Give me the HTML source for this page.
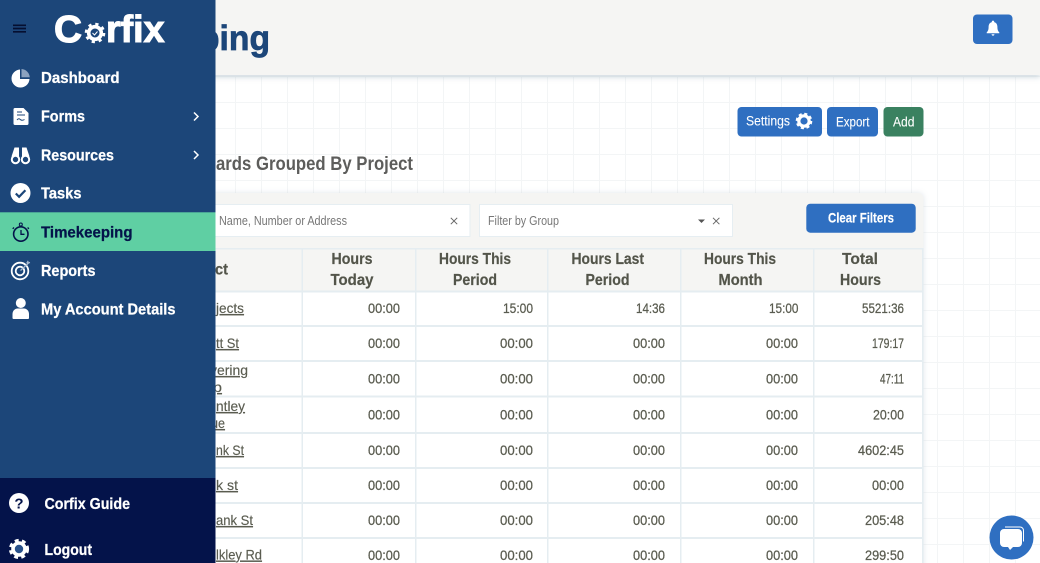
<!DOCTYPE html>
<html><head><meta charset="utf-8"><title>Timekeeping</title>
<style>
html,body{margin:0;padding:0;width:1040px;height:563px;overflow:hidden;background:#fff}
svg{display:block}
text{font-family:"Liberation Sans",sans-serif}
.n{font-weight:700;font-size:16px;fill:#fff;stroke:#fff;stroke-width:.25}
.d{fill:#04134a;stroke:#04134a}
.h{font-weight:700;font-size:15.5px;fill:#53554a;stroke:#53554a;stroke-width:.2}
.v{font-size:14px;fill:#5a5c50;stroke:#5a5c50;stroke-width:.25}
.l{font-size:14px;fill:#5a5c50;stroke:#5a5c50;stroke-width:.15;text-decoration:underline}
.p{font-size:13px;fill:#777}
.b{font-size:13.5px;fill:#fff;stroke:#fff;stroke-width:.1}
.t{font-size:35px;font-weight:700;fill:#1c4679;stroke:#1c4679;stroke-width:.7}
.g{font-size:19px;font-weight:700;fill:#5d5d5b}
.o{font-size:38px;font-weight:700;fill:#fff;stroke:#fff;stroke-width:1.100}
</style></head><body>
<svg width="1040" height="563" viewBox="0 0 1040 563" xmlns="http://www.w3.org/2000/svg">
<defs>
<pattern id="g" x="1" y="24" width="26" height="26" patternUnits="userSpaceOnUse"><path d="M.5 0V26M0 .5H26" stroke="#f3f5f6" stroke-width="1" fill="none"/></pattern>
<filter id="s" x="-10%" y="-50%" width="120%" height="220%"><feDropShadow dx="0" dy="2" stdDeviation="3" flood-color="#a9bcc6" flood-opacity=".6"/></filter>
<filter id="c" x="-5%" y="-5%" width="110%" height="110%"><feDropShadow dx="0" dy="0" stdDeviation="3" flood-color="#b9c8d0" flood-opacity=".45"/></filter>
</defs>
<rect width="1040" height="563" fill="#fff"/>
<rect y="76" width="1040" height="487" fill="url(#g)"/>
<rect width="1040" height="75" fill="#f5f5f3" filter="url(#s)"/>
<text class="t" x="60" y="50">Timekee</text>
<text class="t" x="199" y="50" textLength="71" lengthAdjust="spacingAndGlyphs">ping</text>

<rect x="973" y="14.500" width="39.500" height="29.500" rx="4" fill="#2f6fc1"/>
<path d="M993 22c-3 0-4.400 2.200-4.400 4.800 0 3-.6 4.300-1.900 5.600v.9h12.600v-.9c-1.300-1.300-1.900-2.600-1.900-5.600 0-2.600-1.400-4.800-4.400-4.800z" fill="#fff"/><circle cx="993" cy="21.800" r="1.200" fill="#fff"/><path d="M991.600 34.200h2.800a1.400 1.400 0 0 1-2.800 0z" fill="#fff"/>

<rect x="737.500" y="107" width="84.500" height="29.500" rx="4" fill="#2f6fc1"/>
<text class="b" x="746" y="125.500" textLength="44" lengthAdjust="spacingAndGlyphs">Settings</text>
<circle cx="804" cy="121" r="5.200" fill="none" stroke="#fff" stroke-width="3.200"/><circle cx="804" cy="121" r="7" fill="none" stroke="#fff" stroke-width="2.600" stroke-dasharray="3 2.500"/>
<rect x="827" y="107" width="51" height="29.500" rx="4" fill="#2f6fc1"/>
<text class="b" x="836" y="126.500" textLength="33.500" lengthAdjust="spacingAndGlyphs">Export</text>
<rect x="883.500" y="107" width="40" height="29.500" rx="4" fill="#3a8160"/>
<text class="b" x="893" y="126.500" textLength="21.500" lengthAdjust="spacingAndGlyphs">Add</text>

<text class="g" x="120" y="170">Timec</text>
<text class="g" x="216" y="170" textLength="197" lengthAdjust="spacingAndGlyphs">ards Grouped By Project</text>

<rect x="100" y="193" width="823.500" height="380" rx="5" fill="#f5f5f3" filter="url(#c)"/>
<rect x="100" y="204.500" width="370" height="32" fill="#fff" stroke="#e6eef2"/>
<text class="p" x="219" y="225" textLength="128" lengthAdjust="spacingAndGlyphs">Name, Number or Address</text>
<text class="p" x="160" y="225">Filter by</text>
<path d="M450.800 217.800l6.400 6.400M457.200 217.800l-6.400 6.400" stroke="#666" stroke-width="1"/>
<rect x="479.500" y="204.500" width="253" height="32" fill="#fff" stroke="#e6eef2"/>
<text class="p" x="488" y="225" textLength="71" lengthAdjust="spacingAndGlyphs">Filter by Group</text>
<path d="M698 219.500h7l-3.500 3.500z" fill="#555"/>
<path d="M713 217.800l6.400 6.400M719.400 217.800l-6.400 6.400" stroke="#666" stroke-width="1"/>
<rect x="806.300" y="203.700" width="109.400" height="29" rx="4" fill="#2f6fc1"/>
<text x="828" y="222.500" font-size="13.500" font-weight="700" fill="#fff" stroke="#fff" stroke-width=".15" textLength="66" lengthAdjust="spacingAndGlyphs">Clear Filters</text>

<rect x="100" y="291" width="823" height="272" fill="#fff"/>
<g fill="#e5edf1">
<rect x="100" y="248" width="823" height="1.500"/>
<rect x="100" y="290.500" width="823" height="2"/><rect x="100" y="325" width="823" height="2"/><rect x="100" y="360" width="823" height="2"/><rect x="100" y="395.500" width="823" height="2"/><rect x="100" y="432" width="823" height="2"/><rect x="100" y="467" width="823" height="2"/><rect x="100" y="502" width="823" height="2"/><rect x="100" y="537" width="823" height="2"/>
<rect x="301.500" y="248" width="1.500" height="315"/><rect x="415" y="248" width="1.500" height="315"/><rect x="547" y="248" width="1.500" height="315"/><rect x="680" y="248" width="1.500" height="315"/><rect x="813" y="248" width="1.500" height="315"/><rect x="922" y="248" width="1.500" height="315"/>
</g>

<text class="h" x="215" y="274.500" textLength="13" lengthAdjust="spacingAndGlyphs">ct</text>
<text class="h" x="331.500" y="264" textLength="41" lengthAdjust="spacingAndGlyphs">Hours</text><text class="h" x="330.500" y="285" textLength="43" lengthAdjust="spacingAndGlyphs">Today</text>
<text class="h" x="439" y="264" textLength="72" lengthAdjust="spacingAndGlyphs">Hours This</text><text class="h" x="453" y="285" textLength="44" lengthAdjust="spacingAndGlyphs">Period</text>
<text class="h" x="571.500" y="264" textLength="72.500" lengthAdjust="spacingAndGlyphs">Hours Last</text><text class="h" x="585.500" y="285" textLength="44" lengthAdjust="spacingAndGlyphs">Period</text>
<text class="h" x="704" y="264" textLength="72" lengthAdjust="spacingAndGlyphs">Hours This</text><text class="h" x="718.500" y="285" textLength="44" lengthAdjust="spacingAndGlyphs">Month</text>
<text class="h" x="842" y="264" textLength="36" lengthAdjust="spacingAndGlyphs">Total</text><text class="h" x="840" y="285" textLength="41" lengthAdjust="spacingAndGlyphs">Hours</text>

<text class="l" x="216" y="313" textLength="28" lengthAdjust="spacingAndGlyphs">jects</text>
<text class="l" x="216" y="348" textLength="23" lengthAdjust="spacingAndGlyphs">tt St</text>
<text class="l" x="210" y="375" textLength="38" lengthAdjust="spacingAndGlyphs">vering</text>
<text class="l" x="213" y="392" textLength="9" lengthAdjust="spacingAndGlyphs">p</text>
<text class="l" x="216" y="411" textLength="29" lengthAdjust="spacingAndGlyphs">ntley</text>
<text class="l" x="211" y="428" textLength="14" lengthAdjust="spacingAndGlyphs">ue</text>
<text class="l" x="216" y="455" textLength="28" lengthAdjust="spacingAndGlyphs">nk St</text>
<text class="l" x="216" y="490" textLength="22" lengthAdjust="spacingAndGlyphs">k st</text>
<text class="l" x="216" y="525" textLength="37" lengthAdjust="spacingAndGlyphs">ank St</text>
<text class="l" x="216" y="559.500" textLength="46" lengthAdjust="spacingAndGlyphs">lkley Rd</text>

<g>
<text class="v" x="368" y="313" textLength="32" lengthAdjust="spacingAndGlyphs">00:00</text><text class="v" x="503" y="313" textLength="30" lengthAdjust="spacingAndGlyphs">15:00</text><text class="v" x="636" y="313" textLength="29" lengthAdjust="spacingAndGlyphs">14:36</text><text class="v" x="769" y="313" textLength="29.500" lengthAdjust="spacingAndGlyphs">15:00</text><text class="v" x="862" y="313" textLength="42" lengthAdjust="spacingAndGlyphs">5521:36</text>
<text class="v" x="368" y="348" textLength="32" lengthAdjust="spacingAndGlyphs">00:00</text><text class="v" x="500" y="348" textLength="33" lengthAdjust="spacingAndGlyphs">00:00</text><text class="v" x="633" y="348" textLength="32" lengthAdjust="spacingAndGlyphs">00:00</text><text class="v" x="766" y="348" textLength="32" lengthAdjust="spacingAndGlyphs">00:00</text><text class="v" x="872" y="348" textLength="32" lengthAdjust="spacingAndGlyphs">179:17</text>
<text class="v" x="368" y="383.500" textLength="32" lengthAdjust="spacingAndGlyphs">00:00</text><text class="v" x="500" y="383.500" textLength="33" lengthAdjust="spacingAndGlyphs">00:00</text><text class="v" x="633" y="383.500" textLength="32" lengthAdjust="spacingAndGlyphs">00:00</text><text class="v" x="766" y="383.500" textLength="32" lengthAdjust="spacingAndGlyphs">00:00</text><text class="v" x="880" y="383.500" textLength="24" lengthAdjust="spacingAndGlyphs">47:11</text>
<text class="v" x="368" y="419.500" textLength="32" lengthAdjust="spacingAndGlyphs">00:00</text><text class="v" x="500" y="419.500" textLength="33" lengthAdjust="spacingAndGlyphs">00:00</text><text class="v" x="633" y="419.500" textLength="32" lengthAdjust="spacingAndGlyphs">00:00</text><text class="v" x="766" y="419.500" textLength="32" lengthAdjust="spacingAndGlyphs">00:00</text><text class="v" x="873" y="419.500" textLength="31" lengthAdjust="spacingAndGlyphs">20:00</text>
<text class="v" x="368" y="455" textLength="32" lengthAdjust="spacingAndGlyphs">00:00</text><text class="v" x="500" y="455" textLength="33" lengthAdjust="spacingAndGlyphs">00:00</text><text class="v" x="633" y="455" textLength="32" lengthAdjust="spacingAndGlyphs">00:00</text><text class="v" x="766" y="455" textLength="32" lengthAdjust="spacingAndGlyphs">00:00</text><text class="v" x="858" y="455" textLength="46" lengthAdjust="spacingAndGlyphs">4602:45</text>
<text class="v" x="368" y="490" textLength="32" lengthAdjust="spacingAndGlyphs">00:00</text><text class="v" x="500" y="490" textLength="33" lengthAdjust="spacingAndGlyphs">00:00</text><text class="v" x="633" y="490" textLength="32" lengthAdjust="spacingAndGlyphs">00:00</text><text class="v" x="766" y="490" textLength="32" lengthAdjust="spacingAndGlyphs">00:00</text><text class="v" x="872" y="490" textLength="32" lengthAdjust="spacingAndGlyphs">00:00</text>
<text class="v" x="368" y="525" textLength="32" lengthAdjust="spacingAndGlyphs">00:00</text><text class="v" x="500" y="525" textLength="33" lengthAdjust="spacingAndGlyphs">00:00</text><text class="v" x="633" y="525" textLength="32" lengthAdjust="spacingAndGlyphs">00:00</text><text class="v" x="766" y="525" textLength="32" lengthAdjust="spacingAndGlyphs">00:00</text><text class="v" x="865" y="525" textLength="39" lengthAdjust="spacingAndGlyphs">205:48</text>
<text class="v" x="368" y="560" textLength="32" lengthAdjust="spacingAndGlyphs">00:00</text><text class="v" x="500" y="560" textLength="33" lengthAdjust="spacingAndGlyphs">00:00</text><text class="v" x="633" y="560" textLength="32" lengthAdjust="spacingAndGlyphs">00:00</text><text class="v" x="766" y="560" textLength="32" lengthAdjust="spacingAndGlyphs">00:00</text><text class="v" x="865" y="560" textLength="39" lengthAdjust="spacingAndGlyphs">299:50</text>
</g>

<circle cx="1011.500" cy="537.500" r="22" fill="#2f6fc1"/>
<path d="M1005 527h15a3.500 3.500 0 0 1 3.500 3.500v11" fill="none" stroke="#fff" stroke-width="1"/>
<path d="M1004 529h14a4 4 0 0 1 4 4v10a4 4 0 0 1-4 4h-5l-3 3-2-3h-4a4 4 0 0 1-4-4v-10a4 4 0 0 1 4-4z" fill="#fff"/>

<rect width="215.500" height="563" fill="#1c4679"/>
<rect y="478" width="215.500" height="85" fill="#04134a"/>
<rect y="212.300" width="215.500" height="38.700" fill="#5fcfa3"/>

<path d="M13 25.300h13M13 28.500h13M13 31.800h13" stroke="#050f30" stroke-width="1.700"/>
<text class="o" x="54" y="42" textLength="28" lengthAdjust="spacingAndGlyphs">C</text>
<circle cx="95" cy="33" r="6.300" fill="none" stroke="#fff" stroke-width="3.600"/>
<circle cx="95" cy="33" r="9" fill="none" stroke="#fff" stroke-width="2.600" stroke-dasharray="3.200 3.870"/>
<path d="M92.500 33l2 2 3-3.500" stroke="#fff" stroke-width="1" fill="none"/>
<text class="o" x="106" y="42" textLength="58.500" lengthAdjust="spacingAndGlyphs">rfix</text>

<path d="M20 69.500a9 9 0 1 0 9.500 9.500H20z" fill="#fff"/>
<path d="M21.500 69a9 9 0 0 1 8.300 8.300h-8.300z" fill="#8ba2bf"/>

<path d="M15 108h8.500l5 5v10.500a1.500 1.500 0 0 1-1.500 1.500H15a1.500 1.500 0 0 1-1.500-1.500V109.500A1.500 1.500 0 0 1 15 108z" fill="#fff"/>
<path d="M17 112h5M17 115h8M17 120c2-2.500 3-.5 4 0s2 .5 3.500-.5" stroke="#1c4679" stroke-width="1" fill="none"/>

<path d="M14.500 147.500h4.500v9h-7.500zM26.500 147.500h-4.500v9h7.500z" fill="#fff"/>
<circle cx="15.500" cy="159.500" r="3.700" fill="#1c4679" stroke="#fff" stroke-width="2"/>
<circle cx="25.500" cy="159.500" r="3.700" fill="#1c4679" stroke="#fff" stroke-width="2"/>

<circle cx="20.500" cy="193" r="10" fill="#fff"/>
<path d="M15.800 193.500l3.300 3.300 6.300-6.600" stroke="#1c4679" stroke-width="2.200" fill="none"/>

<circle cx="20.800" cy="234" r="7.200" fill="none" stroke="#04134a" stroke-width="1.600"/>
<circle cx="20.800" cy="224.500" r="1.500" fill="none" stroke="#04134a" stroke-width="1"/>
<path d="M20.800 226v1M21 230v4.300h3.500M14 227.500l-1.300 1.300M27.600 227.500l1.300 1.300" stroke="#04134a" stroke-width="1.300" fill="none"/>

<circle cx="20" cy="271" r="8.300" fill="none" stroke="#fff" stroke-width="1.800"/>
<circle cx="20" cy="271" r="4.300" fill="none" stroke="#fff" stroke-width="1.800"/>
<path d="M20.500 270.500l8-7.500M26.500 262.500l1 .3.500-2M28 263l2-.500" stroke="#a9bbd0" stroke-width="1.300" fill="none"/>

<circle cx="20.800" cy="303" r="5" fill="#fff"/>
<path d="M12.500 318v-4c0-3.300 2.700-5.500 5-5.500h6.600c2.300 0 4.900 2.200 4.900 5.500v4a1 1 0 0 1-1 1H13.500a1 1 0 0 1-1-1z" fill="#fff"/>

<text class="n" x="41" y="83" textLength="78.500" lengthAdjust="spacingAndGlyphs">Dashboard</text>
<text class="n" x="41" y="121.700" textLength="44" lengthAdjust="spacingAndGlyphs">Forms</text>
<text class="n" x="41" y="160.300" textLength="73" lengthAdjust="spacingAndGlyphs">Resources</text>
<text class="n" x="41" y="198.700" textLength="40.500" lengthAdjust="spacingAndGlyphs">Tasks</text>
<text class="n d" x="41" y="237.500" textLength="91.500" lengthAdjust="spacingAndGlyphs" style="fill:#04134a;stroke:#04134a">Timekeeping</text>
<text class="n" x="41" y="276" textLength="54.500" lengthAdjust="spacingAndGlyphs">Reports</text>
<text class="n" x="41" y="314.300" textLength="134.500" lengthAdjust="spacingAndGlyphs">My Account Details</text>
<text class="n" x="44.500" y="509" textLength="85.500" lengthAdjust="spacingAndGlyphs">Corfix Guide</text>
<text class="n" x="44.500" y="555" textLength="47.500" lengthAdjust="spacingAndGlyphs">Logout</text>
<path d="M194 112.500l4 4-4 4M194 151l4 4-4 4" stroke="#fff" stroke-width="1.500" fill="none"/>

<circle cx="19" cy="503" r="10" fill="#fff"/>
<text x="19" y="508.500" text-anchor="middle" font-size="15" font-weight="700" fill="#04134a">?</text>

<circle cx="19" cy="549" r="6" fill="#28508a" stroke="#fff" stroke-width="3.600"/>
<circle cx="19" cy="549" r="8.800" fill="none" stroke="#fff" stroke-width="2.600" stroke-dasharray="4 3.370"/>
</svg>
</body></html>
